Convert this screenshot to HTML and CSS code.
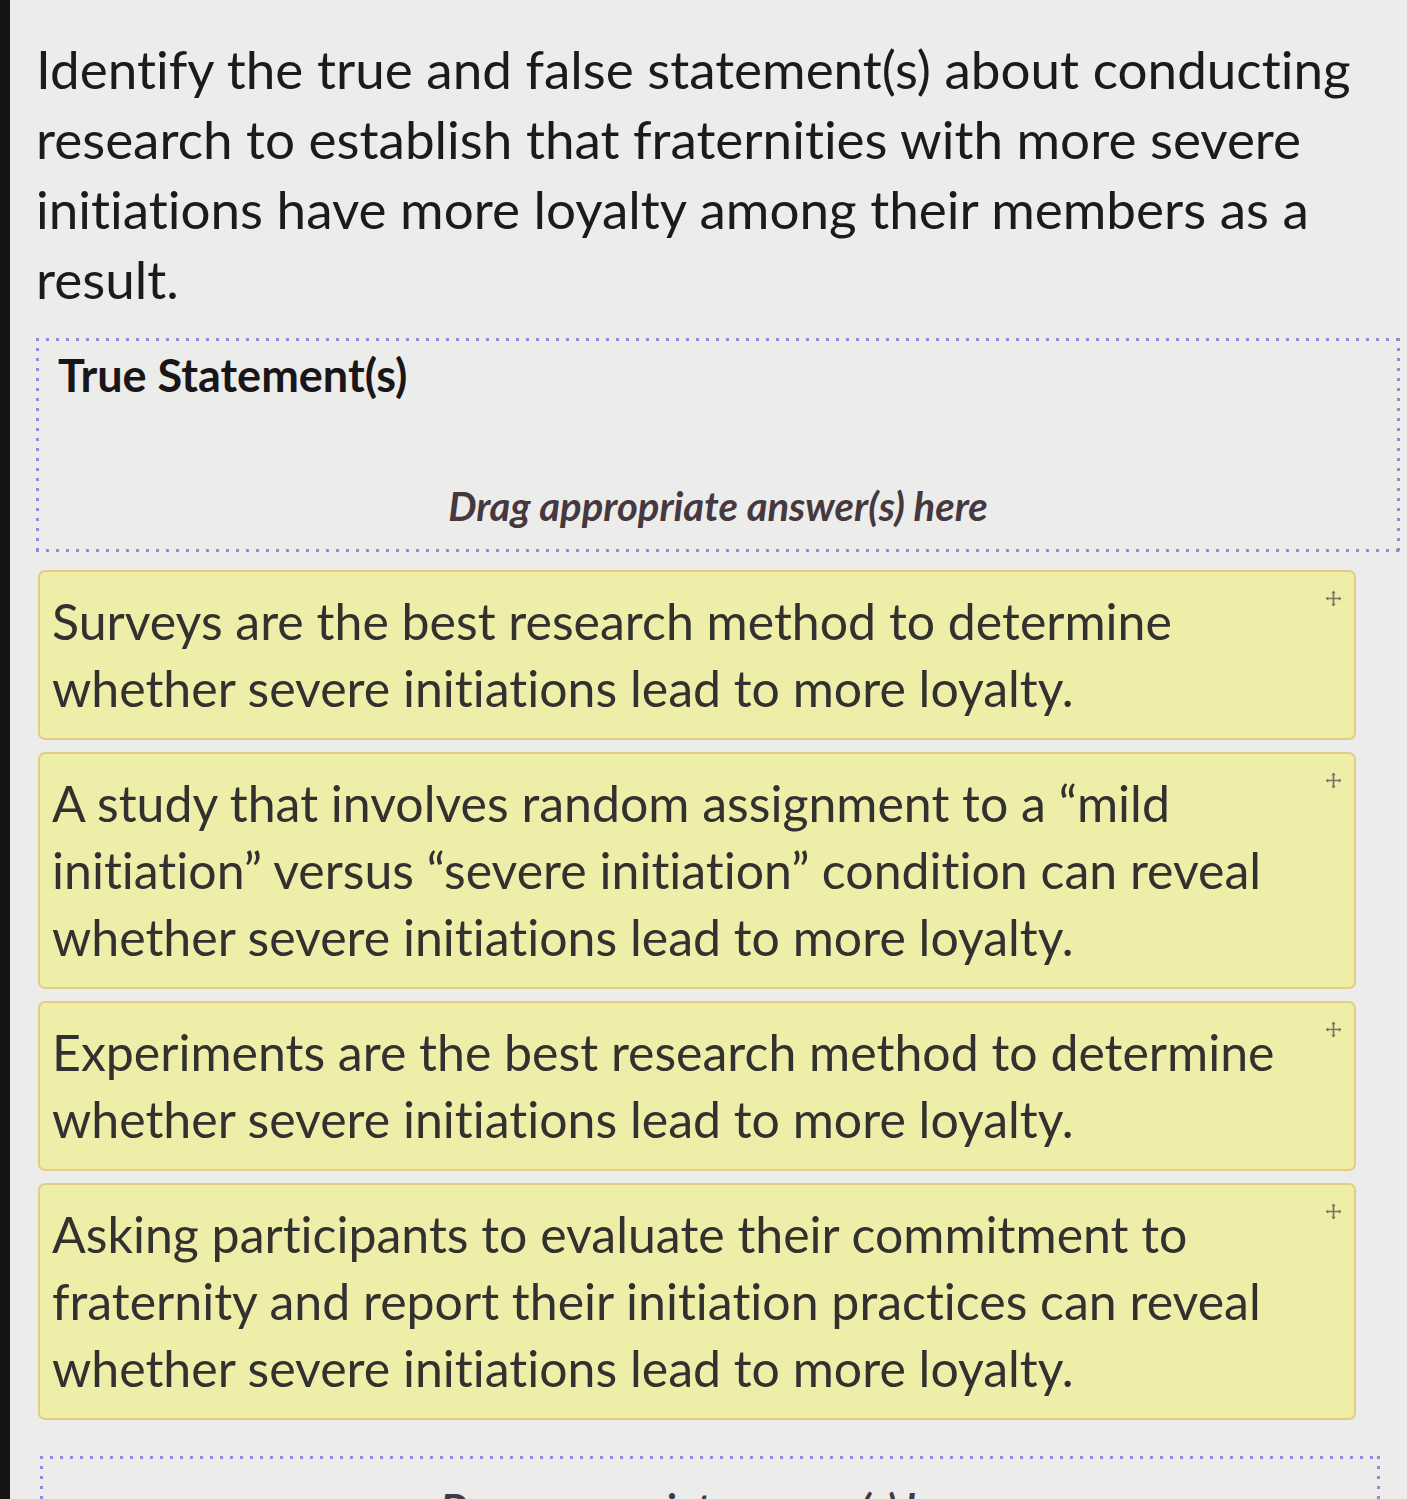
FILE: index.html
```html
<!DOCTYPE html>
<html lang="en">
<head>
    <meta charset="UTF-8">
    <meta name="viewport" content="width=device-width, initial-scale=1.0">
    <title>True and False Statements</title>
    <link rel="stylesheet" href="styles.css">
</head>
<body>
    <div class="screen">
        <p class="question">Identify the true and false statement(s) about conducting research to establish that fraternities with more severe initiations have more loyalty among their members as a result.</p>

        <div class="drop-zone">
            <div class="zone-title">True Statement(s)</div>
            <div class="zone-hint">Drag appropriate answer(s) here</div>
        </div>

        <div class="cards">
            <div class="card">
                <span class="card-text">Surveys are the best research method to determine whether severe initiations lead to more loyalty.</span>
                <svg class="move" viewBox="0 0 16 16"><path d="M8 1.5v13M1.5 8h13"/><path class="tip" d="M8 0.5l2 2.5h-4zM8 15.5l2-2.5h-4zM0.5 8l2.5-2v4zM15.5 8l-2.5-2v4z"/></svg>
            </div>
            <div class="card">
                <span class="card-text">A study that involves random assignment to a “mild initiation” versus “severe initiation” condition can reveal whether severe initiations lead to more loyalty.</span>
                <svg class="move" viewBox="0 0 16 16"><path d="M8 1.5v13M1.5 8h13"/><path class="tip" d="M8 0.5l2 2.5h-4zM8 15.5l2-2.5h-4zM0.5 8l2.5-2v4zM15.5 8l-2.5-2v4z"/></svg>
            </div>
            <div class="card">
                <span class="card-text">Experiments are the best research method to determine whether severe initiations lead to more loyalty.</span>
                <svg class="move" viewBox="0 0 16 16"><path d="M8 1.5v13M1.5 8h13"/><path class="tip" d="M8 0.5l2 2.5h-4zM8 15.5l2-2.5h-4zM0.5 8l2.5-2v4zM15.5 8l-2.5-2v4z"/></svg>
            </div>
            <div class="card">
                <span class="card-text">Asking participants to evaluate their commitment to fraternity and report their initiation practices can reveal whether severe initiations lead to more loyalty.</span>
                <svg class="move" viewBox="0 0 16 16"><path d="M8 1.5v13M1.5 8h13"/><path class="tip" d="M8 0.5l2 2.5h-4zM8 15.5l2-2.5h-4zM0.5 8l2.5-2v4zM15.5 8l-2.5-2v4z"/></svg>
            </div>
        </div>

        <div class="drop-zone drop-zone-bottom">
            <div class="zone-hint">Drag appropriate answer(s) here</div>
        </div>
    </div>
</body>
</html>
```

FILE: styles.css
```css
html, body {
    margin: 0;
    padding: 0;
    height: 100%;
}
body {
    background: #151515;
    font-family: Lato, "Open Sans", sans-serif;
    font-variant-ligatures: none;
    overflow: hidden;
}
.screen {
    margin-left: 10px;
    min-height: 100%;
    background: #ececeb;
    padding: 34px 7px 0 26px;
}
.question {
    margin: 0 0 24px 0;
    font-size: 53px;
    line-height: 70px;
    color: #1c1a1c;
    max-width: 1360px;
}
/* dotted frame drawn with gradients so the dots are spaced like the original */
.drop-zone {
    padding: 12px 22px 24px 22px;
    background:
        linear-gradient(to right, #8d8be0 3px, transparent 3px) top left / 10px 3px repeat-x,
        linear-gradient(to right, #8d8be0 3px, transparent 3px) bottom left / 10px 3px repeat-x,
        linear-gradient(to bottom, #8d8be0 3px, transparent 3px) top left / 3px 10px repeat-y,
        linear-gradient(to bottom, #8d8be0 3px, transparent 3px) top right / 3px 10px repeat-y;
}
.zone-title {
    font-weight: bold;
    font-size: 45px;
    line-height: 50px;
    color: #1a1618;
}
.zone-hint {
    margin-top: 84px;
    text-align: center;
    font-weight: bold;
    font-style: italic;
    font-size: 40px;
    line-height: 44px;
    color: #45383f;
}
.cards {
    display: flex;
    flex-direction: column;
    gap: 12px;
    margin: 18px 44px 0 2px;
}
.card {
    position: relative;
    background: #efeea9;
    border: 2px solid #e3cd86;
    border-radius: 7px;
    padding: 16px 60px 16px 12px;
}
.card-text {
    font-size: 50px;
    line-height: 67px;
    color: #333030;
}
.move {
    position: absolute;
    top: 18px;
    right: 12px;
    width: 17px;
    height: 17px;
    fill: none;
    stroke: #7a7566;
    stroke-width: 1.6;
}
.move .tip {
    fill: #7a7566;
    stroke: none;
}
.drop-zone-bottom {
    margin: 36px 20px 0 4px;
    padding-bottom: 40px;
}
.drop-zone-bottom .zone-hint {
    margin-top: 18px;
}
```
